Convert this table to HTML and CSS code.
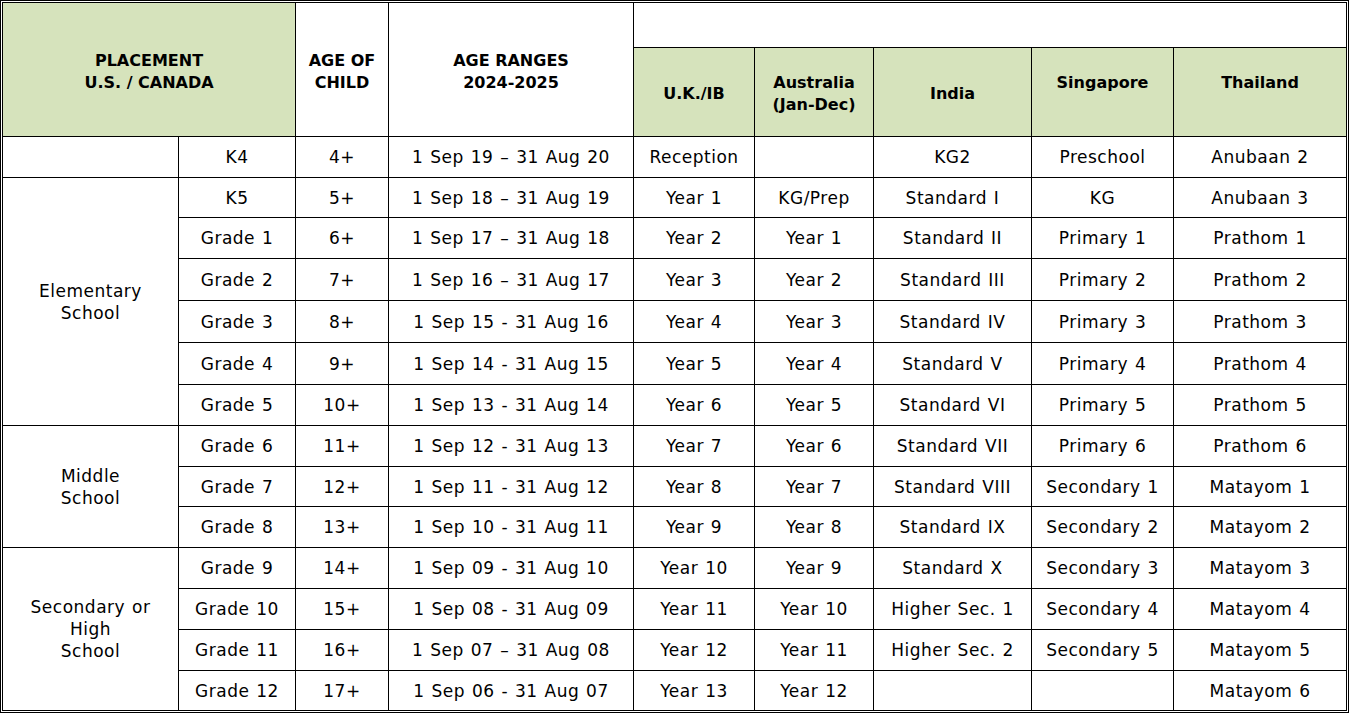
FILE: index.html
```html
<!DOCTYPE html>
<html lang="en">
<head>
<meta charset="utf-8">
<title>Placement Age Ranges 2024-2025</title>
<link rel="stylesheet" href="styles.css">
</head>
<body>
<table class="grid">
  <colgroup>
    <col class="c-level"><col class="c-grade"><col class="c-age"><col class="c-range">
    <col class="c-uk"><col class="c-au"><col class="c-in"><col class="c-sg"><col class="c-th">
  </colgroup>
  <thead>
    <tr class="h1">
      <th colspan="2" rowspan="2" class="green">PLACEMENT<br>U.S. / CANADA</th>
      <th rowspan="2">AGE OF<br>CHILD</th>
      <th rowspan="2">AGE RANGES<br>2024-2025</th>
      <th colspan="5" class="end"></th>
    </tr>
    <tr class="h2">
      <th class="green">U.K./IB</th>
      <th class="green">Australia<br>(Jan-Dec)</th>
      <th class="green">India</th>
      <th class="green">Singapore<br>&nbsp;</th>
      <th class="green end">Thailand<br>&nbsp;</th>
    </tr>
  </thead>
  <tbody>
    <tr>
      <td></td><td>K4</td><td>4+</td><td>1 Sep 19 – 31 Aug 20</td>
      <td>Reception</td><td></td><td>KG2</td><td>Preschool</td><td class="end">Anubaan 2</td>
    </tr>
    <tr class="short">
      <td rowspan="6">Elementary<br>School</td><td>K5</td><td>5+</td><td>1 Sep 18 – 31 Aug 19</td>
      <td>Year 1</td><td>KG/Prep</td><td>Standard I</td><td>KG</td><td class="end">Anubaan 3</td>
    </tr>
    <tr>
      <td>Grade 1</td><td>6+</td><td>1 Sep 17 – 31 Aug 18</td>
      <td>Year 2</td><td>Year 1</td><td>Standard II</td><td>Primary 1</td><td class="end">Prathom 1</td>
    </tr>
    <tr class="tall">
      <td>Grade 2</td><td>7+</td><td>1 Sep 16 – 31 Aug 17</td>
      <td>Year 3</td><td>Year 2</td><td>Standard III</td><td>Primary 2</td><td class="end">Prathom 2</td>
    </tr>
    <tr class="tall">
      <td>Grade 3</td><td>8+</td><td>1 Sep 15 - 31 Aug 16</td>
      <td>Year 4</td><td>Year 3</td><td>Standard IV</td><td>Primary 3</td><td class="end">Prathom 3</td>
    </tr>
    <tr class="tall">
      <td>Grade 4</td><td>9+</td><td>1 Sep 14 - 31 Aug 15</td>
      <td>Year 5</td><td>Year 4</td><td>Standard V</td><td>Primary 4</td><td class="end">Prathom 4</td>
    </tr>
    <tr>
      <td>Grade 5</td><td>10+</td><td>1 Sep 13 - 31 Aug 14</td>
      <td>Year 6</td><td>Year 5</td><td>Standard VI</td><td>Primary 5</td><td class="end">Prathom 5</td>
    </tr>
    <tr>
      <td rowspan="3">Middle<br>School</td><td>Grade 6</td><td>11+</td><td>1 Sep 12 - 31 Aug 13</td>
      <td>Year 7</td><td>Year 6</td><td>Standard VII</td><td>Primary 6</td><td class="end">Prathom 6</td>
    </tr>
    <tr class="short">
      <td>Grade 7</td><td>12+</td><td>1 Sep 11 - 31 Aug 12</td>
      <td>Year 8</td><td>Year 7</td><td>Standard VIII</td><td>Secondary 1</td><td class="end">Matayom 1</td>
    </tr>
    <tr>
      <td>Grade 8</td><td>13+</td><td>1 Sep 10 - 31 Aug 11</td>
      <td>Year 9</td><td>Year 8</td><td>Standard IX</td><td>Secondary 2</td><td class="end">Matayom 2</td>
    </tr>
    <tr>
      <td rowspan="4" class="bottom">Secondary or<br>High<br>School</td><td>Grade 9</td><td>14+</td><td>1 Sep 09 - 31 Aug 10</td>
      <td>Year 10</td><td>Year 9</td><td>Standard X</td><td>Secondary 3</td><td class="end">Matayom 3</td>
    </tr>
    <tr>
      <td>Grade 10</td><td>15+</td><td>1 Sep 08 - 31 Aug 09</td>
      <td>Year 11</td><td>Year 10</td><td>Higher Sec. 1</td><td>Secondary 4</td><td class="end">Matayom 4</td>
    </tr>
    <tr>
      <td>Grade 11</td><td>16+</td><td>1 Sep 07 – 31 Aug 08</td>
      <td>Year 12</td><td>Year 11</td><td>Higher Sec. 2</td><td>Secondary 5</td><td class="end">Matayom 5</td>
    </tr>
    <tr class="last">
      <td>Grade 12</td><td>17+</td><td>1 Sep 06 - 31 Aug 07</td>
      <td>Year 13</td><td>Year 12</td><td></td><td></td><td class="end">Matayom 6</td>
    </tr>
  </tbody>
</table>
</body>
</html>
```
FILE: styles.css
```css
* { box-sizing: border-box; }

html, body {
  margin: 0;
  padding: 0;
  background: #ffffff;
}

.grid {
  width: 1349px;
  table-layout: fixed;
  border-collapse: separate;
  border-spacing: 0;
  border: 3px double #000000;
  font-family: "DejaVu Sans", Verdana, sans-serif;
  font-size: 17px;
  line-height: 22px;
  color: #000000;
}

.c-level { width: 176px; }
.c-grade { width: 117px; }
.c-age   { width: 93px; }
.c-range { width: 245px; }
.c-uk    { width: 121px; }
.c-au    { width: 119px; }
.c-in    { width: 158px; }
.c-sg    { width: 142px; }
.c-th    { width: 172px; }

.grid th,
.grid td {
  border-right: 1px solid #000000;
  border-bottom: 1px solid #000000;
  padding: 0 2px;
  text-align: center;
  vertical-align: middle;
  white-space: nowrap;
}

.grid td {
  letter-spacing: 0.5px;
  word-spacing: 1px;
}

.grid th {
  font-weight: bold;
  font-size: 16px;
  padding-top: 4px;
}

.grid .end { border-right: none; }
.grid .bottom,
.grid tr.last td { border-bottom: none; }

.green { background: #d6e3bc; }

tr.h1 { height: 45px; }
tr.h2 { height: 89px; }
tbody tr { height: 41px; }
tbody tr.short { height: 40px; }
tbody tr.tall { height: 42px; }
tbody tr.last { height: 39px; }
```
